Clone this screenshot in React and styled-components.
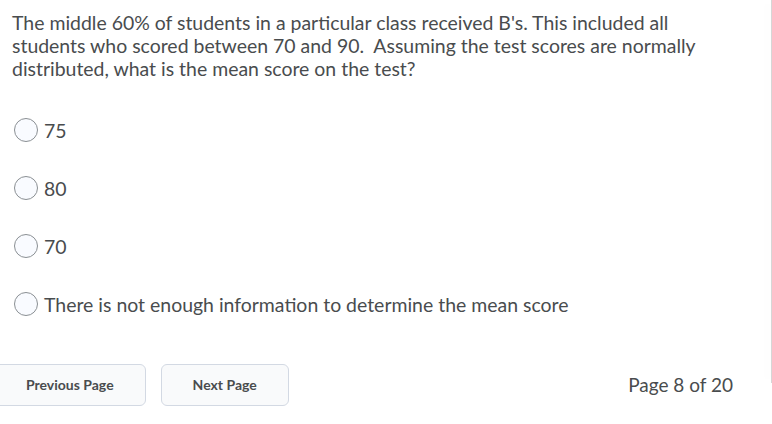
import React from 'react'
import styled, { createGlobalStyle } from 'styled-components'

const GlobalStyle = createGlobalStyle`
  html, body {
    margin: 0;
    padding: 0;
    background: #ffffff;
  }
  body {
    font-family: Lato, "Open Sans", sans-serif;
    color: #494c4e;
  }
`

const Page = styled.div`
  position: relative;
  width: 772px;
  height: 424px;
  overflow: hidden;
  background: #ffffff;
`

const EdgeShadow = styled.div`
  position: absolute;
  top: 0;
  right: 0;
  width: 1px;
  height: 383px;
  background: #d6d6d6;
  box-shadow: -4px 0 10px rgba(0, 0, 0, 0.06);
`

const Content = styled.div`
  padding: 11px 0 0 12px;
`

const Question = styled.p`
  margin: 0;
  font-size: 19.45px;
  line-height: 23px;
  max-width: 720px;
`

const Options = styled.div`
  display: flex;
  flex-direction: column;
  gap: 34px;
  margin-top: 38px;
`

const Option = styled.label`
  display: flex;
  align-items: center;
  gap: 6px;
  height: 24px;
  padding-left: 2px;
  font-size: 19.45px;
  cursor: pointer;
`

const Radio = styled.span`
  box-sizing: border-box;
  width: 24px;
  height: 24px;
  border-radius: 50%;
  border: 1px solid #8a8f93;
  background: #f9fbff;
  flex-shrink: 0;
`

const Footer = styled.div`
  display: flex;
  align-items: center;
  justify-content: space-between;
  margin: 48px 39px 0 -18px;
`

const Buttons = styled.div`
  display: flex;
  gap: 15px;
`

const Button = styled.button`
  box-sizing: border-box;
  height: 42px;
  padding: 0 31px 2px;
  border: 1px solid #d3d9e3;
  border-radius: 6px;
  background: #f9fafb;
  color: #494c4e;
  font-family: Lato, "Open Sans", sans-serif;
  font-weight: 700;
  font-size: 14px;
  cursor: pointer;
`

const PageCount = styled.span`
  font-size: 19px;
  margin-bottom: 1px;
`

const choices = ['75', '80', '70', 'There is not enough information to determine the mean score']

export default function App() {
  return (
    <Page>
      <GlobalStyle />
      <Content>
        <Question>
          The middle 60% of students in a particular class received B's. This included all
          <br />
          students who scored between 70 and 90.&nbsp; Assuming the test scores are normally
          <br />
          distributed, what is the mean score on the test?
        </Question>
        <Options>
          {choices.map((c) => (
            <Option key={c}>
              <Radio />
              {c}
            </Option>
          ))}
        </Options>
        <Footer>
          <Buttons>
            <Button>Previous Page</Button>
            <Button>Next Page</Button>
          </Buttons>
          <PageCount>Page 8 of 20</PageCount>
        </Footer>
      </Content>
      <EdgeShadow />
    </Page>
  )
}
